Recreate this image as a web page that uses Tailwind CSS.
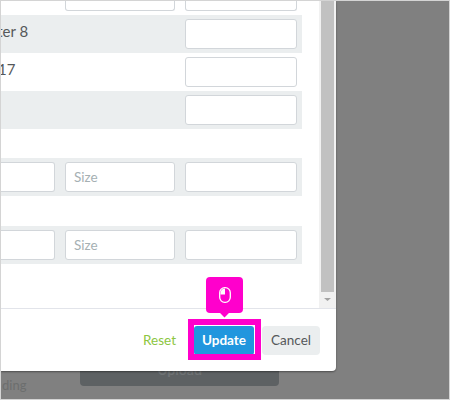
<!DOCTYPE html>
<html lang="en">
<head>
    <meta charset="UTF-8">
    <title>Update</title>
    <script src="https://cdn.jsdelivr.net/npm/@tailwindcss/browser@4"></script>
</head>
<body class="m-0 overflow-hidden">
    <div class="relative w-[450px] h-[400px] bg-[#808080] border border-[#d4d4d4] overflow-hidden font-['Lato','Liberation_Sans',sans-serif]">
        <!-- page behind the overlay -->
        <div class="absolute left-0 top-[353px] h-[32px] w-[278px] flex">
            <div class="w-[79px] shrink-0 pt-[21px] pl-[1px] text-[13px] leading-[20px] text-[#6c6e6e]">ding</div>
            <div class="w-[199px] shrink-0 bg-[#5d6163] rounded-b-[4px] text-center text-[14px] font-bold text-[#6f7375] leading-[32px]">Upload</div>
        </div>

        <!-- modal -->
        <div class="absolute left-0 top-0 w-[335px] h-[370px] bg-white rounded-br-[4px] flex flex-col shadow-[0_1px_2px_rgba(0,0,0,0.4)]">
            <div class="flex h-[307px]">
                <div class="w-[318px] overflow-hidden">
                    <div class="flex w-[301px] h-[14px] pb-[4px] pr-[5px] gap-[10px] justify-end items-end">
                        <div class="w-[110px] h-[10px] bg-white border border-t-0 border-[#d2d6da] rounded-b-[3px]"></div>
                        <div class="w-[112px] h-[10px] bg-white border border-t-0 border-[#d2d6da] rounded-b-[3px]"></div>
                    </div>
                    <div class="flex items-center justify-between w-[301px] h-[38px] bg-[#ebeeef] pr-[5px]">
                        <span class="text-[15px] text-[#55585a] -ml-[38px] -mt-[5px]">Chapter 8</span>
                        <div class="w-[112px] h-[30px] bg-white border border-[#d2d6da] rounded-[3px]"></div>
                    </div>
                    <div class="flex items-center justify-between w-[301px] h-[38px] pr-[5px]">
                        <span class="text-[15px] text-[#55585a] -ml-[3px] -mt-[5px]">17</span>
                        <div class="w-[112px] h-[30px] bg-white border border-[#d2d6da] rounded-[3px]"></div>
                    </div>
                    <div class="flex items-center justify-end w-[301px] h-[38px] bg-[#ebeeef] pr-[5px]">
                        <div class="w-[112px] h-[30px] bg-white border border-[#d2d6da] rounded-[3px]"></div>
                    </div>
                    <div class="flex items-center justify-end gap-[10px] w-[301px] h-[38px] mt-[29px] bg-[#ebeeef] pr-[5px]">
                        <div class="w-[54px] h-[30px] bg-white border border-[#d2d6da] border-l-0 rounded-r-[3px]"></div>
                        <div class="w-[110px] h-[30px] bg-white border border-[#d2d6da] rounded-[3px] pl-[8px] text-[13.500px] leading-[28px] text-[#a5b0b3]">Size</div>
                        <div class="w-[112px] h-[30px] bg-white border border-[#d2d6da] rounded-[3px]"></div>
                    </div>
                    <div class="flex items-center justify-end gap-[10px] w-[301px] h-[38px] mt-[30px] bg-[#ebeeef] pr-[5px]">
                        <div class="w-[54px] h-[30px] bg-white border border-[#d2d6da] border-l-0 rounded-r-[3px]"></div>
                        <div class="w-[110px] h-[30px] bg-white border border-[#d2d6da] rounded-[3px] pl-[8px] text-[13.500px] leading-[28px] text-[#a5b0b3]">Size</div>
                        <div class="w-[112px] h-[30px] bg-white border border-[#d2d6da] rounded-[3px]"></div>
                    </div>
                </div>
                <!-- scrollbar -->
                <div class="w-[17px] bg-[#f1f1f1] flex flex-col items-start pl-[2px]">
                    <div class="w-[13px] h-[291px] bg-[#c1c1c1]"></div>
                    <svg class="mt-[6px] ml-[3px]" width="7" height="3" viewBox="0 0 7 3"><path d="M0 0h7L3.500 3z" fill="#a3a3a3"/></svg>
                </div>
            </div>
            <div class="flex items-center justify-end h-[63px] border-t border-[#e2e4ea] pr-[16px] gap-[8px]">
                <span class="text-[13.500px] text-[#8dc63f] mr-[10px]">Reset</span>
                <button class="w-[60px] h-[29px] bg-[#2196de] rounded-[3px] text-white text-[13.500px] font-bold">Update</button>
                <button class="w-[58px] h-[29px] bg-[#ebeeef] rounded-[4px] text-[#55585a] text-[13.500px]">Cancel</button>
            </div>
        </div>

        <!-- highlight around the Update button -->
        <div class="absolute left-[187px] top-[318px] w-[73px] h-[41px] border-[6px] border-[#ff00cc]"></div>
        <div class="absolute left-[205px] top-[276px] w-[37px] h-[36px] bg-[#ff00cc] rounded-[4px] flex items-center justify-center">
            <svg width="12" height="16" viewBox="0 0 12 16" fill="none">
                <rect x="0.700" y="0.700" width="10.600" height="14.600" rx="5" stroke="#fff" stroke-width="1.300"/>
                <path d="M6 1.500A4.500 4.500 0 0 0 1.500 6V7.500H6z" fill="#fff"/>
            </svg>
            <div class="absolute left-[15px] top-[32px] w-[7px] h-[7px] bg-[#ff00cc] rotate-45"></div>
        </div>
    </div>
</body>
</html>
